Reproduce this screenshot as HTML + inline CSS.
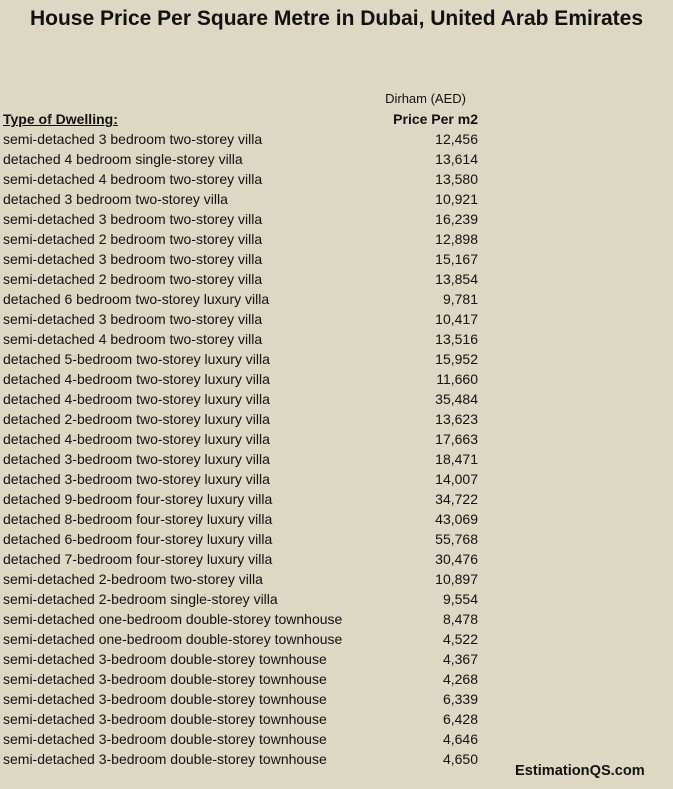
<!DOCTYPE html>
<html><head><style>
html,body{margin:0;padding:0}
body{width:673px;height:789px;background:#dcd8c3;font-family:"Liberation Sans",sans-serif;color:#111;position:relative;overflow:hidden}
.t{position:absolute;left:0;width:673px;top:6px;text-align:center;font-weight:bold;font-size:21px;line-height:26px}
.r{position:absolute;left:3px;width:475px;height:20px;font-size:14px;line-height:20px}
.r span{position:absolute;right:0;top:0}
.u{font-weight:bold;text-decoration:underline}
.w{position:absolute;left:515px;top:763px;font-weight:bold;font-size:14.6px}
</style></head><body>
<div class="t">House Price Per Square Metre in Dubai, United Arab Emirates</div>
<div class="r" style="top:89px;font-size:13px"><span style="right:12px">Dirham (AED)</span></div>
<div class="r u" style="top:109px">Type of Dwelling:<span>Price Per m2</span></div>
<div id="rows"></div>
<script>
var d=[["semi-detached 3 bedroom two-storey villa","12,456"],["detached 4 bedroom single-storey villa","13,614"],["semi-detached 4 bedroom two-storey villa","13,580"],["detached 3 bedroom two-storey villa","10,921"],["semi-detached 3 bedroom two-storey villa","16,239"],["semi-detached 2 bedroom two-storey villa","12,898"],["semi-detached 3 bedroom two-storey villa","15,167"],["semi-detached 2 bedroom two-storey villa","13,854"],["detached 6 bedroom two-storey luxury villa","9,781"],["semi-detached 3 bedroom two-storey villa","10,417"],["semi-detached 4 bedroom two-storey villa","13,516"],["detached 5-bedroom two-storey luxury villa","15,952"],["detached 4-bedroom two-storey luxury villa","11,660"],["detached 4-bedroom two-storey luxury villa","35,484"],["detached 2-bedroom two-storey luxury villa","13,623"],["detached 4-bedroom two-storey luxury villa","17,663"],["detached 3-bedroom two-storey luxury villa","18,471"],["detached 3-bedroom two-storey luxury villa","14,007"],["detached 9-bedroom four-storey luxury villa","34,722"],["detached 8-bedroom four-storey luxury villa","43,069"],["detached 6-bedroom four-storey luxury villa","55,768"],["detached 7-bedroom four-storey luxury villa","30,476"],["semi-detached 2-bedroom two-storey villa","10,897"],["semi-detached 2-bedroom single-storey villa","9,554"],["semi-detached one-bedroom double-storey townhouse","8,478"],["semi-detached one-bedroom double-storey townhouse","4,522"],["semi-detached 3-bedroom double-storey townhouse","4,367"],["semi-detached 3-bedroom double-storey townhouse","4,268"],["semi-detached 3-bedroom double-storey townhouse","6,339"],["semi-detached 3-bedroom double-storey townhouse","6,428"],["semi-detached 3-bedroom double-storey townhouse","4,646"],["semi-detached 3-bedroom double-storey townhouse","4,650"]];
var h="";for(var i=0;i<d.length;i++){h+='<div class="r" style="top:'+(129+i*20)+'px">'+d[i][0]+'<span>'+d[i][1]+'</span></div>';}
document.getElementById("rows").innerHTML=h;
</script>
<div class="w">EstimationQS.com</div>
</body></html>
